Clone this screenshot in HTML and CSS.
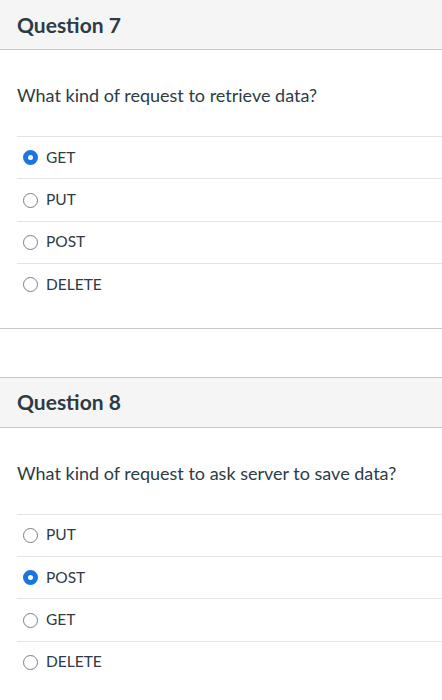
FILE: index.html
```html
<!DOCTYPE html>
<html lang="en">
<head>
<meta charset="utf-8">
<title>Quiz</title>
<link rel="stylesheet" href="styles.css">
</head>
<body>
<div class="quiz">
  <section class="question">
    <header class="q-header"><h2 class="q-title">Question 7</h2></header>
    <p class="q-text">What kind of request to retrieve data?</p>
    <ul class="answers">
      <li class="answer"><span class="radio checked"></span><span class="label">GET</span></li>
      <li class="answer"><span class="radio"></span><span class="label">PUT</span></li>
      <li class="answer"><span class="radio"></span><span class="label">POST</span></li>
      <li class="answer"><span class="radio"></span><span class="label">DELETE</span></li>
    </ul>
  </section>
  <section class="question">
    <header class="q-header"><h2 class="q-title">Question 8</h2></header>
    <p class="q-text">What kind of request to ask server to save data?</p>
    <ul class="answers">
      <li class="answer"><span class="radio"></span><span class="label">PUT</span></li>
      <li class="answer"><span class="radio checked"></span><span class="label">POST</span></li>
      <li class="answer"><span class="radio"></span><span class="label">GET</span></li>
      <li class="answer"><span class="radio"></span><span class="label">DELETE</span></li>
    </ul>
  </section>
</div>
</body>
</html>
```
FILE: styles.css
```css
html, body {
  margin: 0;
  padding: 0;
  background: #ffffff;
}
body {
  font-family: Lato, "Liberation Sans", sans-serif;
  color: #2d3b45;
  overflow: hidden;
}
.quiz {
  margin-top: -1px;
  display: flex;
  flex-direction: column;
  gap: 48px;
}
.question {
  border-top: 1px solid #c4c8cb;
  border-bottom: 1px solid #c4c8cb;
  padding-bottom: 22px;
}
.q-header {
  height: 49px;
  background: #f5f5f5;
  border-bottom: 1px solid #c4c8cb;
  display: flex;
  align-items: center;
  padding-left: 17px;
  padding-bottom: 1px;
  box-sizing: border-box;
  height: 50px;
}
.q-title {
  margin: 0;
  font-size: 21px;
  font-weight: 700;
  line-height: 1;
  color: #2d3b45;
}
.q-text {
  margin: 0;
  padding: 33px 17px 29px 17px;
  font-size: 18px;
  line-height: 24px;
}
.answers {
  list-style: none;
  margin: 0 0 0 17px;
  padding: 0;
}
.answer {
  height: 41.4px;
  border-top: 1px solid #e2e4e6;
  display: flex;
  align-items: center;
  padding-left: 6px;
  gap: 8px;
  font-size: 15.5px;
}
.radio {
  width: 15px;
  height: 15px;
  box-sizing: border-box;
  border-radius: 50%;
  border: 1.5px solid #7b7f83;
  background: #fff;
  flex: none;
}
.radio.checked {
  border: 5px solid #1b74e4;
}
.label {
  line-height: 20px;
  margin-bottom: 2px;
}
```
